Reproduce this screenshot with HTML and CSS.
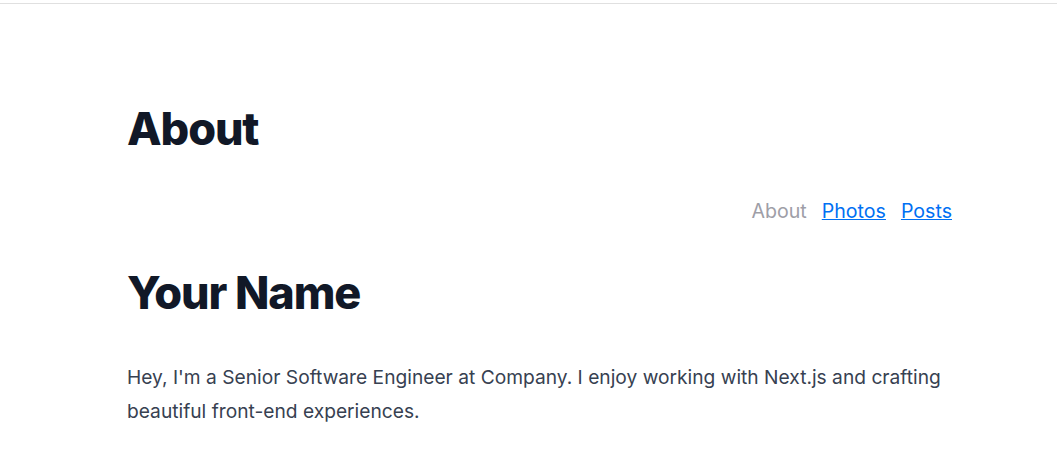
FILE: index.html
```html
<!DOCTYPE html>
<html lang="en">
<head>
    <meta charset="UTF-8">
    <meta name="viewport" content="width=device-width, initial-scale=1.0">
    <title>About</title>
    <link rel="stylesheet" href="styles.css">
</head>
<body>
    <div class="topbar"></div>
    <div class="container">
        <h1 class="page-title">About</h1>

        <nav class="nav">
            <span class="nav-current">About</span>
            <a href="#">Photos</a>
            <a href="#">Posts</a>
        </nav>

        <h2 class="name">Your Name</h2>
        <p class="intro">Hey, I'm a Senior Software Engineer at Company. I enjoy working with Next.js and crafting beautiful front-end experiences.</p>
    </div>
</body>
</html>
```

FILE: styles.css
```css
/* Page styles */
body {
    font-family: Inter, "Noto Sans", sans-serif;
    background-color: white;
    margin: 0;
    padding: 0;
}

.topbar {
    height: 3px;
    border-bottom: 1px solid #e0e0e0;
}

.container {
    width: 825px;
    margin-left: 127px;
    padding-top: 97px;
}

.page-title {
    font-size: 45px;
    font-weight: 800;
    letter-spacing: -1.1px;
    line-height: 56px;
    color: #111827;
    margin: 0;
}

.nav {
    display: flex;
    justify-content: flex-end;
    gap: 15px;
    font-size: 19.6px;
    line-height: 28px;
    margin-top: 40px;
}

.nav-current {
    color: #9e9ea7;
}

.nav a {
    color: #0070f3;
    text-decoration: underline;
}

.name {
    font-size: 45px;
    font-weight: 800;
    letter-spacing: -1.1px;
    line-height: 56px;
    color: #111827;
    margin: 40px 0 0;
}

.intro {
    font-size: 19.2px;
    line-height: 34px;
    color: #374151;
    margin: 39px 0 0;
}
```
